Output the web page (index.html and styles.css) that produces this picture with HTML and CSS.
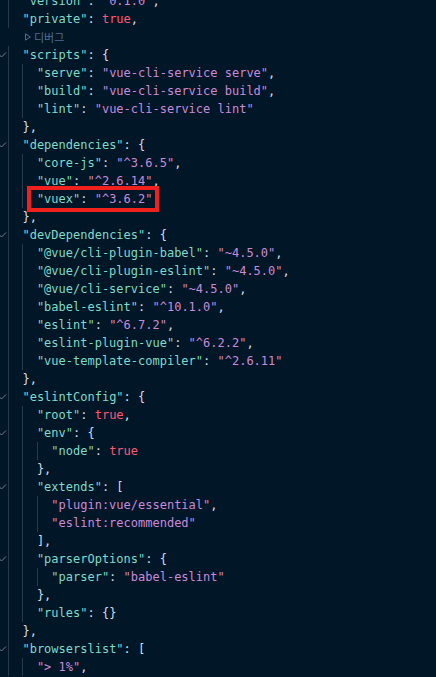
FILE: index.html
```html
<!DOCTYPE html>
<html lang="ko">
<head>
  <meta charset="UTF-8">
  <meta name="viewport" content="width=device-width, initial-scale=1.0">
  <title>package.json</title>
  <link rel="stylesheet" href="styles.css">
</head>
<body>
  <div class="editor">
    <div class="line"><span class="fold"></span><span class="code"><span class="ind"></span><span class="key">"version"</span>: <span class="str">"0.1.0"</span>,</span></div>
    <div class="line"><span class="fold"></span><span class="code"><span class="ind"></span><span class="key">"private"</span>: <span class="bool">true</span>,</span></div>
    <div class="line lens"><span class="fold"></span><span class="code"><svg class="lens-icon" width="6" height="8" viewBox="0 0 6 8"><path d="M0.5 0.8 L5.3 4 L0.5 7.2 Z" fill="none" stroke="#4f6f91" stroke-width="1"/></svg>디버그</span></div>
    <div class="line"><span class="fold"><svg width="8" height="18" viewBox="0 0 8 18"><path d="M-2 7.5 L1.5 11 L6 6.5" fill="none" stroke="#6b7f90" stroke-width="1"/></svg></span><span class="code"><span class="ind"></span><span class="key">"scripts"</span>: {</span></div>
    <div class="line"><span class="fold"></span><span class="code"><span class="ind"></span><span class="ind"></span><span class="key">"serve"</span>: <span class="str">"vue-cli-service serve"</span>,</span></div>
    <div class="line"><span class="fold"></span><span class="code"><span class="ind"></span><span class="ind"></span><span class="key">"build"</span>: <span class="str">"vue-cli-service build"</span>,</span></div>
    <div class="line"><span class="fold"></span><span class="code"><span class="ind"></span><span class="ind"></span><span class="key">"lint"</span>: <span class="str">"vue-cli-service lint"</span></span></div>
    <div class="line"><span class="fold"></span><span class="code"><span class="ind"></span>},</span></div>
    <div class="line"><span class="fold"><svg width="8" height="18" viewBox="0 0 8 18"><path d="M-2 7.5 L1.5 11 L6 6.5" fill="none" stroke="#6b7f90" stroke-width="1"/></svg></span><span class="code"><span class="ind"></span><span class="key">"dependencies"</span>: {</span></div>
    <div class="line"><span class="fold"></span><span class="code"><span class="ind"></span><span class="ind"></span><span class="key">"core-js"</span>: <span class="str">"^3.6.5"</span>,</span></div>
    <div class="line"><span class="fold"></span><span class="code"><span class="ind"></span><span class="ind"></span><span class="key">"vue"</span>: <span class="str">"^2.6.14"</span>,</span></div>
    <div class="line"><span class="fold"></span><span class="code"><span class="ind"></span><span class="ind"></span><span class="key">"vuex"</span>: <span class="str">"^3.6.2"</span></span></div>
    <div class="line"><span class="fold"></span><span class="code"><span class="ind"></span>},</span></div>
    <div class="line"><span class="fold"><svg width="8" height="18" viewBox="0 0 8 18"><path d="M-2 7.5 L1.5 11 L6 6.5" fill="none" stroke="#6b7f90" stroke-width="1"/></svg></span><span class="code"><span class="ind"></span><span class="key">"devDependencies"</span>: {</span></div>
    <div class="line"><span class="fold"></span><span class="code"><span class="ind"></span><span class="ind"></span><span class="key">"@vue/cli-plugin-babel"</span>: <span class="str">"~4.5.0"</span>,</span></div>
    <div class="line"><span class="fold"></span><span class="code"><span class="ind"></span><span class="ind"></span><span class="key">"@vue/cli-plugin-eslint"</span>: <span class="str">"~4.5.0"</span>,</span></div>
    <div class="line"><span class="fold"></span><span class="code"><span class="ind"></span><span class="ind"></span><span class="key">"@vue/cli-service"</span>: <span class="str">"~4.5.0"</span>,</span></div>
    <div class="line"><span class="fold"></span><span class="code"><span class="ind"></span><span class="ind"></span><span class="key">"babel-eslint"</span>: <span class="str">"^10.1.0"</span>,</span></div>
    <div class="line"><span class="fold"></span><span class="code"><span class="ind"></span><span class="ind"></span><span class="key">"eslint"</span>: <span class="str">"^6.7.2"</span>,</span></div>
    <div class="line"><span class="fold"></span><span class="code"><span class="ind"></span><span class="ind"></span><span class="key">"eslint-plugin-vue"</span>: <span class="str">"^6.2.2"</span>,</span></div>
    <div class="line"><span class="fold"></span><span class="code"><span class="ind"></span><span class="ind"></span><span class="key">"vue-template-compiler"</span>: <span class="str">"^2.6.11"</span></span></div>
    <div class="line"><span class="fold"></span><span class="code"><span class="ind"></span>},</span></div>
    <div class="line"><span class="fold"><svg width="8" height="18" viewBox="0 0 8 18"><path d="M-2 7.5 L1.5 11 L6 6.5" fill="none" stroke="#6b7f90" stroke-width="1"/></svg></span><span class="code"><span class="ind"></span><span class="key">"eslintConfig"</span>: {</span></div>
    <div class="line"><span class="fold"></span><span class="code"><span class="ind"></span><span class="ind"></span><span class="key">"root"</span>: <span class="bool">true</span>,</span></div>
    <div class="line"><span class="fold"><svg width="8" height="18" viewBox="0 0 8 18"><path d="M-2 7.5 L1.5 11 L6 6.5" fill="none" stroke="#6b7f90" stroke-width="1"/></svg></span><span class="code"><span class="ind"></span><span class="ind"></span><span class="key">"env"</span>: {</span></div>
    <div class="line"><span class="fold"></span><span class="code"><span class="ind"></span><span class="ind"></span><span class="ind"></span><span class="key">"node"</span>: <span class="bool">true</span></span></div>
    <div class="line"><span class="fold"></span><span class="code"><span class="ind"></span><span class="ind"></span>},</span></div>
    <div class="line"><span class="fold"><svg width="8" height="18" viewBox="0 0 8 18"><path d="M-2 7.5 L1.5 11 L6 6.5" fill="none" stroke="#6b7f90" stroke-width="1"/></svg></span><span class="code"><span class="ind"></span><span class="ind"></span><span class="key">"extends"</span>: [</span></div>
    <div class="line"><span class="fold"></span><span class="code"><span class="ind"></span><span class="ind"></span><span class="ind"></span><span class="str">"plugin:vue/essential"</span>,</span></div>
    <div class="line"><span class="fold"></span><span class="code"><span class="ind"></span><span class="ind"></span><span class="ind"></span><span class="str">"eslint:recommended"</span></span></div>
    <div class="line"><span class="fold"></span><span class="code"><span class="ind"></span><span class="ind"></span>],</span></div>
    <div class="line"><span class="fold"><svg width="8" height="18" viewBox="0 0 8 18"><path d="M-2 7.5 L1.5 11 L6 6.5" fill="none" stroke="#6b7f90" stroke-width="1"/></svg></span><span class="code"><span class="ind"></span><span class="ind"></span><span class="key">"parserOptions"</span>: {</span></div>
    <div class="line"><span class="fold"></span><span class="code"><span class="ind"></span><span class="ind"></span><span class="ind"></span><span class="key">"parser"</span>: <span class="str">"babel-eslint"</span></span></div>
    <div class="line"><span class="fold"></span><span class="code"><span class="ind"></span><span class="ind"></span>},</span></div>
    <div class="line"><span class="fold"></span><span class="code"><span class="ind"></span><span class="ind"></span><span class="key">"rules"</span>: {}</span></div>
    <div class="line"><span class="fold"></span><span class="code"><span class="ind"></span>},</span></div>
    <div class="line"><span class="fold"><svg width="8" height="18" viewBox="0 0 8 18"><path d="M-2 7.5 L1.5 11 L6 6.5" fill="none" stroke="#6b7f90" stroke-width="1"/></svg></span><span class="code"><span class="ind"></span><span class="key">"browserslist"</span>: [</span></div>
    <div class="line"><span class="fold"></span><span class="code"><span class="ind"></span><span class="ind"></span><span class="str">"&gt; 1%"</span>,</span></div>

    <!-- highlight box drawn over the vuex line -->
    <div class="highlight"></div>
  </div>
</body>
</html>
```

FILE: styles.css
```css
html, body {
  margin: 0;
  height: 100%;
  background-color: #011627;
  overflow: hidden;
}

.editor {
  position: relative;
  margin-top: -8px;
  font-family: "DejaVu Sans Mono", monospace;
  font-size: 12px;
  color: #d6deeb;
}

.line {
  display: flex;
  height: 18px;
  line-height: 18px;
  white-space: pre;
}

.fold {
  width: 8px;
  flex: none;
  display: flex;
}

.code {
  display: flex;
  align-items: stretch;
}

.ind {
  display: inline-block;
  width: 2ch;
  border-left: 1px solid #243a4e;
  box-sizing: border-box;
}

.key {
  color: #7fdbca;
}

.str {
  color: #c98bd9;
}

.bool {
  color: #ff5874;
}

.lens .code {
  align-items: center;
  padding-left: 17px;
  font-family: "Noto Sans CJK KR", sans-serif;
  font-size: 11px;
  color: #4f6f91;
}

.lens-icon {
  margin-right: 3px;
}

.highlight {
  position: absolute;
  left: 27px;
  top: 194px;
  width: 132px;
  height: 26px;
  border: 4px solid #f0201c;
  box-sizing: border-box;
}
```
